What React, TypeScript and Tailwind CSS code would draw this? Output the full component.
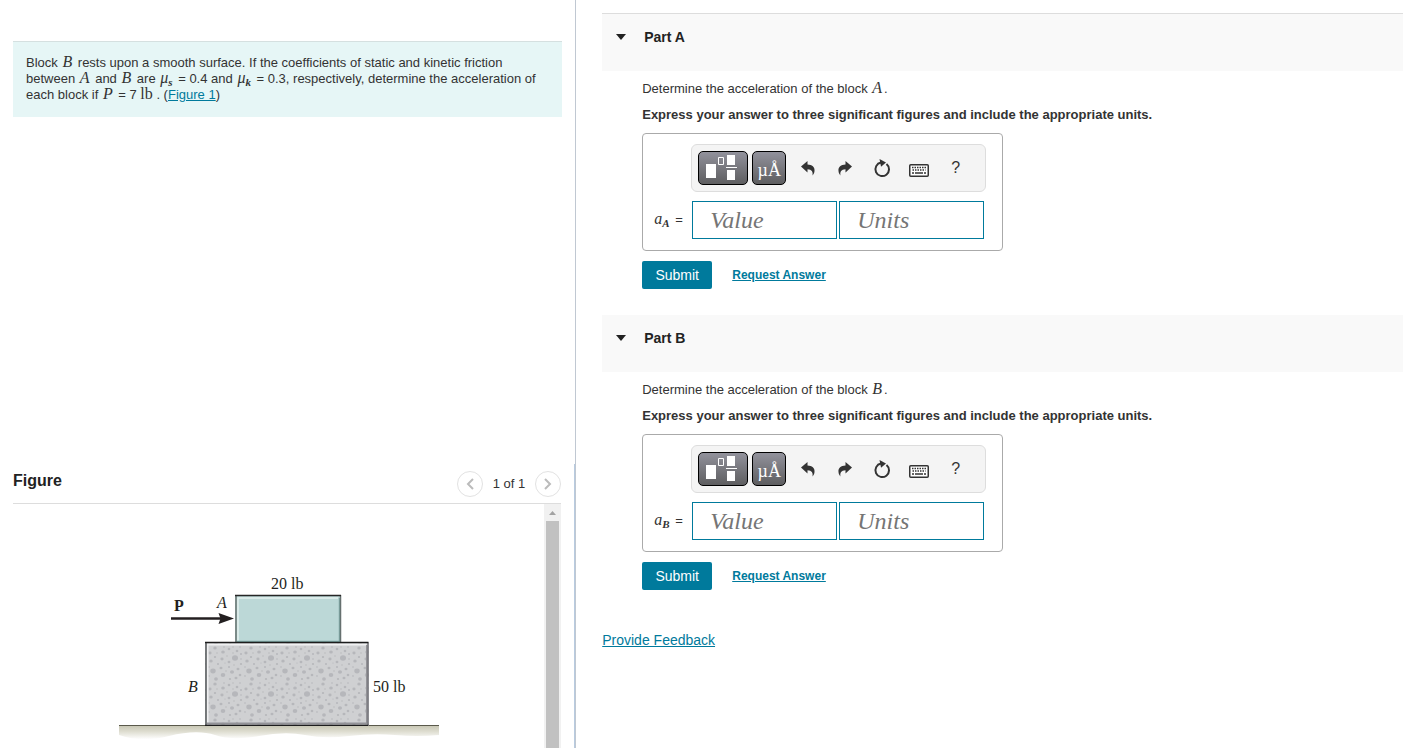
import type { ReactNode } from "react";

function MathVar({ children }: { children: ReactNode }) {
  return (
    <i className="pr-[2px] pl-px font-['Liberation_Serif',serif] text-base leading-none">{children}</i>
  );
}

function Sub({ children }: { children: ReactNode }) {
  return <sub className="bottom-[-3px] text-[11px] font-bold">{children}</sub>;
}

// pebbles of one 36x36 concrete tile: x, y, radius
const pebbles = [
  [28, 13, 3], [6, 26, 2.7], [16, 30, 2.3], [9, 34, 1.9], [4, 16, 1.7],
  [8, 12, 1.2], [15, 14, 1.6], [22, 17, 1.4], [16, 7, 1.8], [22, 4, 1.3],
  [8, 3, 1.7], [3, 8, 1.6], [22, 22, 1], [14, 23, 1.5], [25, 27, 2],
  [31, 24, 1.5], [30, 6, 1.3], [34, 9, 1], [34, 19, 1.1], [33, 30, 1.3],
  [29, 33, 1.5], [23, 34, 1.1], [11, 19, 1], [2, 22, 0.8], [27, 20, 0.7],
  [20, 11, 0.7], [10, 8, 0.7], [34, 14, 0.8], [26, 8, 0.7], [17, 2, 0.8],
  [19, 26, 0.7], [2, 31, 0.9], [18, 18, 0.6], [26, 2, 0.7], [33, 2, 0.8],
];

function BlocksFigure() {
  return (
    <svg width="320" height="175" viewBox="0 0 320 175" role="img" aria-label="Block A resting on block B">
      <defs>
        <pattern id="concrete" x="88" y="72" width="36" height="36" patternUnits="userSpaceOnUse">
          <rect width="36" height="36" fill="#cfd0d2" />
          {pebbles.map(([x, y, r]) => (
            <ellipse key={`${x}-${y}`} cx={x} cy={y} rx={r} ry={r * 0.9} fill="#b6b7bb" />
          ))}
        </pattern>
        <linearGradient id="ground" x1="0" y1="0" x2="0" y2="1">
          <stop offset="0" stopColor="#c9c8b6" />
          <stop offset="0.4" stopColor="#dddccf" />
          <stop offset="1" stopColor="#ffffff" />
        </linearGradient>
      </defs>

      <path d="M0 153h320v9q-22 2-44 0t-46 1-44-1-46 1-44-1-46 1-50-1z" fill="url(#ground)" />
      <path d="M0 152.5h320" stroke="#5a594b" />

      <rect x="116" y="22" width="106" height="48" fill="#bcd8d7" />
      <path d="M119 69V25h100" fill="none" stroke="#e3f1f0" strokeWidth="1.5" />
      <path d="M118 68.5h102.5V25" fill="none" stroke="#7fa9a6" strokeWidth="1.5" />
      <path d="M117 70V23M221.5 22v48" stroke="#66706f" strokeWidth="1.5" />
      <path d="M116 22.5h106" stroke="#262626" strokeWidth="1.3" />

      <rect x="86" y="69" width="164" height="84" fill="url(#concrete)" />
      <path d="M88.5 150V71.5h159" fill="none" stroke="#f0f0f1" strokeWidth="2" />
      <path d="M88 150.5h160V72" fill="none" stroke="#929297" strokeWidth="2" />
      <path d="M87 152V70" stroke="#55585a" strokeWidth="1.5" />
      <path d="M249 152V70" stroke="#77777c" strokeWidth="1.5" />
      <path d="M86 69.5h163.5M86 152.3h163.5" stroke="#1d1d1d" strokeWidth="1.3" />

      <path d="M52 45.5h52" stroke="#231f20" strokeWidth="2.5" />
      <path d="M115 45.5 99.5 40l2 5.5-2 5.5z" fill="#231f20" />

      <g className="font-['Liberation_Serif',serif] text-base" fill="#231f20">
        <text x="152" y="16">20 lb</text>
        <text x="254" y="119">50 lb</text>
        <text x="55" y="38" fontWeight="bold">P</text>
        <text x="98" y="35" fontStyle="italic">A</text>
        <text x="69" y="119" fontStyle="italic">B</text>
      </g>
    </svg>
  );
}

function TemplatesIcon() {
  return (
    <svg width="48" height="32" viewBox="0 0 48 32" className="shrink-0" aria-hidden="true">
      <path d="M7 12h10v14H7zM28 3h8v10h-8zM28 18h8v10h-8zM27 15h11v1H27z" fill="#fff" />
      <path d="M19.5 5.5h5v7h-5z" fill="none" stroke="#fff" />
    </svg>
  );
}

function ArrowIcon({ flip }: { flip?: boolean }) {
  return (
    <svg width="14" height="15" viewBox="0 0 14 15" className={flip ? "-scale-x-100" : ""} aria-hidden="true">
      <path d="M0 5.5 6.5 0v3.5C11 3.700 14 6 13.5 10c-.2 2-.9 3.300-2 4.500.6-3.500-.5-6-5-6.200v3.200z" fill="#333" />
    </svg>
  );
}

function ResetIcon() {
  return (
    <svg width="18" height="19" viewBox="0 0 18 19" aria-hidden="true">
      <path d="M8 3.600A6.800 6.800 0 1 0 13.5 5" fill="none" stroke="#333" strokeWidth="2" />
      <path d="M6.5 0 13 3.5 8 7.800z" fill="#333" />
    </svg>
  );
}

function KeyboardIcon() {
  return (
    <svg width="20" height="13" viewBox="0 0 20 13" aria-hidden="true">
      <rect x=".75" y=".75" width="18.5" height="11.5" rx="1" fill="#fff" stroke="#333" strokeWidth="1.5" />
      <path d="M3 3.5h14M3.5 6h13" stroke="#333" strokeWidth="1.5" strokeDasharray="1.5 1" />
      <path d="M3 9h2M6 9h8M15 9h2" stroke="#333" strokeWidth="1.5" />
    </svg>
  );
}

function ToolButton({ label, children }: { label: string; children: ReactNode }) {
  return (
    <button aria-label={label} className="flex h-[34px] w-[37px] items-center justify-center text-[#333]">
      {children}
    </button>
  );
}

const darkButton =
  "flex h-[34px] items-center justify-center rounded-[5px] border border-black bg-linear-to-b from-[#92929c] to-[#5e5e60] text-white";

const fieldClass =
  "h-[38px] w-[145px] border border-[#007a9c] bg-white pl-[17px] font-['Liberation_Serif',serif] text-2xl text-[#333] placeholder:italic placeholder:text-[#757575] outline-none";

function Part({ name, first }: { name: string; first?: boolean }) {
  return (
    <section>
      <header className={first ? "border-t border-[#ddd] bg-[#f9f9f9]" : "bg-[#f9f9f9]"}>
        <button className="flex h-[57px] w-full items-start pt-[15px] pl-[14px] text-left">
          <svg width="10" height="6" viewBox="0 0 10 6" className="mt-[5px] mr-[18px]" aria-hidden="true">
            <path d="M0 0h10L5 6z" fill="#222" />
          </svg>
          <span className="text-sm leading-4 font-bold text-[#222]">Part {name}</span>
        </button>
      </header>
      <div className="pt-[9px] pb-[26px] pl-10">
        <p className="h-4 leading-4">
          Determine the acceleration of the block <MathVar>{name}</MathVar>.
        </p>
        <p className="mt-[11px] leading-4 font-bold">
          Express your answer to three significant figures and include the appropriate units.
        </p>
        <div className="mt-[10px] w-[361px] rounded border border-[#aaa] pt-[10px] pb-[11px]">
          <div className="ml-12 flex h-12 w-[295px] rounded-md border border-[#ddd] bg-[#f4f4f4] p-[6px]">
            <button aria-label="Templates" className={`${darkButton} w-[50px]`}>
              <TemplatesIcon />
            </button>
            <button aria-label="Symbols" className={`${darkButton} mr-[3px] ml-1 w-[34px] pt-1 font-['Liberation_Serif',serif] text-lg`}>
              µÅ
            </button>
            <ToolButton label="Undo"><ArrowIcon /></ToolButton>
            <ToolButton label="Redo"><ArrowIcon flip /></ToolButton>
            <ToolButton label="Reset"><ResetIcon /></ToolButton>
            <ToolButton label="Keyboard shortcuts">
              <span className="pt-1"><KeyboardIcon /></span>
            </ToolButton>
            <ToolButton label="Help"><span className="text-base leading-none">?</span></ToolButton>
          </div>
          <div className="mt-[9px] flex items-center gap-[2px] pl-[10px]">
            <label htmlFor={`value-${name}`} className="w-[37px]">
              <MathVar>a<Sub>{name}</Sub></MathVar> =
            </label>
            <input id={`value-${name}`} placeholder="Value" className={fieldClass} />
            <input aria-label={`Units ${name}`} placeholder="Units" className={fieldClass} />
          </div>
        </div>
        <div className="mt-[10px] flex items-center gap-5">
          <button className="h-7 w-[70px] rounded-xs bg-[#007a9c] text-sm text-white">Submit</button>
          <a href="#" className="text-xs font-bold text-[#007a9c] underline">Request Answer</a>
        </div>
      </div>
    </section>
  );
}

function PagerButton({ label, d }: { label: string; d: string }) {
  return (
    <button aria-label={label} className="flex size-[26px] items-center justify-center rounded-full border border-[#e2e2e2]">
      <svg width="8" height="12" viewBox="0 0 8 12" fill="none" aria-hidden="true">
        <path d={d} stroke="#bbb" strokeWidth="2" />
      </svg>
    </button>
  );
}

export default function App() {
  return (
    <div className="flex min-h-screen bg-white font-['Liberation_Sans',Arial,sans-serif] text-[13px] text-[#333]">
      <aside className="flex w-[41%] shrink-0 flex-col justify-between">
        <div className="mt-[41px] mr-[13px] ml-[13px] border-t border-[#d5e0e0] bg-[#e6f6f6] px-[13px] pt-3 pb-[15px]">
          <p className="leading-4">
            <span className="block h-4">
              Block <MathVar>B</MathVar> rests upon a smooth surface. If the coefficients of static and kinetic friction
            </span>
            <span className="block h-4">
              between <MathVar>A</MathVar> and <MathVar>B</MathVar> are <MathVar>μ<Sub>s</Sub></MathVar> = 0.4 and{" "}
              <MathVar>μ<Sub>k</Sub></MathVar> = 0.3, respectively, determine the acceleration of
            </span>
            <span className="block h-4">
              each block if <MathVar>P</MathVar> = 7{" "}
              <span className="font-['Liberation_Serif',serif] text-base leading-none">lb</span> . (
              <a href="#figure" className="text-[#007a9c] underline">Figure 1</a>)
            </span>
          </p>
        </div>

        <section id="figure" className="border-r border-[#b8cbe0] pr-[13px] pl-[13px]">
          <div className="flex h-10 items-center justify-between border-b border-[#ddd]">
            <h2 className="pb-[6px] text-base font-bold text-[#222]">Figure</h2>
            <div className="flex items-center gap-[10px]">
              <PagerButton label="Previous figure" d="M7 1 2 6l5 5" />
              <span>1 of 1</span>
              <PagerButton label="Next figure" d="M1 1l5 5-5 5" />
            </div>
          </div>
          <div className="flex">
            <div className="flex flex-1 justify-center pt-[69px]">
              <BlocksFigure />
            </div>
            <div className="flex w-[17px] flex-col items-center bg-[#f1f1f1]">
              <svg width="7" height="4" viewBox="0 0 7 4" className="mt-[7px] mb-[6px]" aria-hidden="true">
                <path d="M0 4h7L3.5 0z" fill="#a3a3a3" />
              </svg>
              <div className="w-[13px] flex-1 bg-[#c1c1c1]" />
            </div>
          </div>
        </section>
      </aside>

      <main className="flex-1 border-l border-[#c0c8d2] pt-[13px] pl-[26px]">
        <Part name="A" first />
        <Part name="B" />
        <a href="#" className="mt-[14px] inline-block text-sm text-[#007a9c] underline">Provide Feedback</a>
      </main>
    </div>
  );
}
